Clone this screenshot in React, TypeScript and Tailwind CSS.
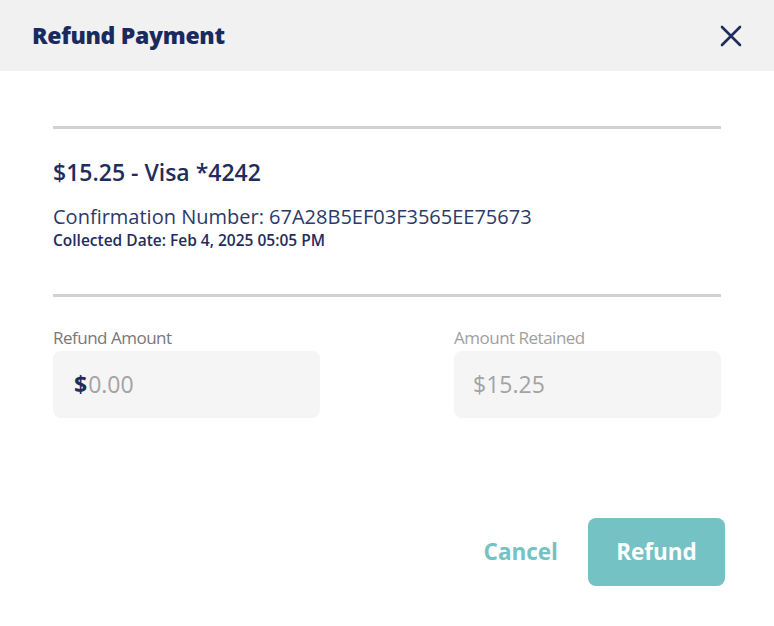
import React from "react";

export default function App() {
  const font = { fontFamily: '"Open Sans", "Noto Sans", sans-serif' };
  return (
    <div className="w-[774px] h-[626px] bg-white text-[#1f2d5c]" style={font}>
      <div className="h-[71px] bg-[#f1f1f1] flex items-center justify-between pl-[32px] pr-[32px]">
        <h1 className="text-[23px] font-extrabold tracking-[-0.3px] text-[#1b2a5e]">Refund Payment</h1>
        <button className="w-[22px] h-[22px] flex items-center justify-center">
          <svg width="22" height="22" viewBox="0 0 22 22" fill="none" stroke="#1f2d5c" strokeWidth="2.6" strokeLinecap="round">
            <path d="M2 2 L20 20 M20 2 L2 20" />
          </svg>
        </button>
      </div>
      <div className="px-[53px] pt-[55px] flex flex-col">
        <div className="h-[3px] bg-[#d2d2d2]" />
        <div className="pt-[28px] text-[23px] font-semibold leading-[30px] text-[#1f2d5c]">$15.25 - Visa *4242</div>
        <div className="pt-[17px] text-[20px] leading-[26px] text-[#2a3a6a]">Confirmation Number: 67A28B5EF03F3565EE75673</div>
        <div className="text-[15.5px] font-semibold leading-[20px] text-[#1f2d5c]">Collected Date: Feb 4, 2025 05:05 PM</div>
        <div className="mt-[44px] h-[3px] bg-[#d2d2d2]" />
        <div className="pt-[31px] flex justify-between">
          <div className="flex flex-col w-[267px]">
            <label className="text-[17px] font-medium leading-[20px] text-[#777777] tracking-[-0.5px]">Refund Amount</label>
            <div className="mt-[3px] h-[67px] rounded-[8px] bg-[#f5f5f5] flex items-center pl-[21px] text-[23px]">
              <span className="font-bold text-[#1f2d5c]">$</span>
              <span className="text-[#a3a3a3] ml-[1px]">0.00</span>
            </div>
          </div>
          <div className="flex flex-col w-[267px]">
            <label className="text-[17px] font-medium leading-[20px] text-[#a0a0a0] tracking-[-0.5px]">Amount Retained</label>
            <div className="mt-[3px] h-[67px] rounded-[8px] bg-[#f5f5f5] flex items-center pl-[19px] text-[23px] font-medium text-[#a3a3a3]">
              $15.25
            </div>
          </div>
        </div>
        <div className="mt-[100px] flex justify-end items-center gap-[30px] -mr-[4px]">
          <button className="text-[22.5px] font-bold text-[#74c2c3]">Cancel</button>
          <button className="w-[137px] h-[68px] rounded-[8px] bg-[#74c2c3] text-white text-[22.5px] font-bold">Refund</button>
        </div>
      </div>
    </div>
  );
}
